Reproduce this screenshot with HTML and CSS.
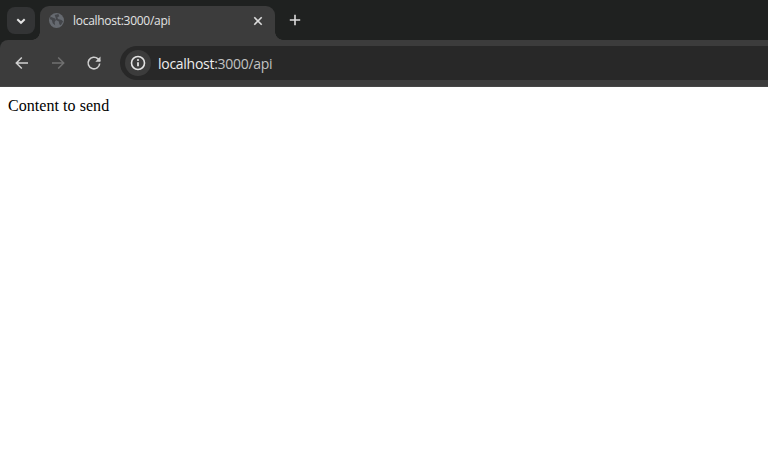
FILE: index.html
```html
<!DOCTYPE html>
<html lang="en">
<head>
<meta charset="utf-8">
<title>localhost:3000/api</title>
<link rel="stylesheet" href="styles.css">
</head>
<body>
<header class="chrome">
  <div class="tabstrip">
    <button class="tab-search" aria-label="Search tabs">
      <svg width="12" height="12" viewBox="0 0 12 12"><path d="M2.3 4.200 6 7.800l3.700-3.600" fill="none" stroke="#e3e3e3" stroke-width="2"/></svg>
    </button>
    <div class="tab">
      <svg class="favicon" width="15" height="15" viewBox="0 0 16 16">
        <circle cx="8" cy="8" r="8" fill="#666a70"/>
        <path d="M1.500 4 6 5.500l1.500 2L6 9.500 6.500 13 4 11 3 7.500 .8 6.500zM10 1l1 2.500-2 1 .5 2 4 1 1.500 1.500-2.500 4-1.500-1-.5-3-3-1.500L7 4.500 6 2z" fill="#44464a"/>
      </svg>
      <span class="tab-title">localhost:3000/api</span>
      <svg class="tab-close" width="10" height="10" viewBox="0 0 10 10"><path d="M1.300 1.300l7.400 7.400M8.700 1.300 1.300 8.700" stroke="#dcdcdc" stroke-width="1.600"/></svg>
    </div>
    <svg class="new-tab" width="12" height="12" viewBox="0 0 12 12"><path d="M6 .8v10.400M.8 6h10.400" stroke="#dcdcdc" stroke-width="1.600"/></svg>
  </div>
  <div class="toolbar">
    <svg class="nav" width="16" height="16" viewBox="0 0 16 16"><path d="M14 8H2.500M7.800 2.500 2.300 8l5.500 5.500" fill="none" stroke="#d0d0d0" stroke-width="1.500"/></svg>
    <svg class="nav" width="16" height="16" viewBox="0 0 16 16"><path d="M2 8h11.500M8.200 2.500 13.700 8l-5.500 5.500" fill="none" stroke="#707070" stroke-width="1.500"/></svg>
    <svg class="nav" width="16" height="16" viewBox="0 0 16 16"><path d="M13.700 8.500A5.800 5.800 0 1 1 12 3.900L14 6" fill="none" stroke="#d0d0d0" stroke-width="1.600"/><path d="M14.500 1.500v5.200H9.300z" fill="#d0d0d0"/></svg>
    <div class="omnibox">
      <span class="site-info">
        <svg width="16" height="16" viewBox="0 0 16 16"><circle cx="8" cy="8" r="6.500" fill="none" stroke="#e3e3e3" stroke-width="1.600"/><path d="M8 7.200v4" stroke="#e3e3e3" stroke-width="1.800"/><circle cx="8" cy="5" r="1.100" fill="#e3e3e3"/></svg>
      </span>
      <span class="url"><span class="host">localhost</span>:3000/api</span>
    </div>
  </div>
</header>
<main class="page">Content to send</main>
</body>
</html>
```
FILE: styles.css
```css
* { box-sizing: border-box; }
html, body { margin: 0; height: 100%; background: #fff; }
body { overflow: hidden; }

.chrome {
  font-family: "Open Sans", "Liberation Sans", sans-serif;
  background: #1f2120;
}

.tabstrip {
  display: flex;
  align-items: flex-start;
  height: 40px;
  padding: 6px 0 0 7px;
}
.tab-search {
  display: flex;
  align-items: center;
  justify-content: center;
  width: 28px;
  height: 27px;
  margin-top: 1px;
  padding: 0;
  border: 0;
  border-radius: 8px;
  background: #333435;
}
.tab {
  position: relative;
  display: flex;
  align-items: center;
  width: 235px;
  height: 34px;
  margin-left: 5px;
  padding: 0 12px 5px 9px;
  border-radius: 9px 9px 0 0;
  background: #3c3c3c;
}
.tab::before,
.tab::after {
  content: "";
  position: absolute;
  bottom: 0;
  width: 8px;
  height: 8px;
  background: radial-gradient(circle at var(--cx) 0, #1f2120 7.500px, #3c3c3c 8px);
}
.tab::before { left: -8px; --cx: 0; }
.tab::after { right: -8px; --cx: 100%; }
.favicon { flex: none; }
.tab-title {
  flex: 1;
  margin-left: 9px;
  font-size: 12px;
  letter-spacing: -0.28px;
  color: #e3e3e3;
  white-space: nowrap;
}
.tab-close { flex: none; }
.new-tab { margin: 8px 0 0 14px; }

.toolbar {
  display: flex;
  align-items: center;
  height: 47px;
  padding: 0 0 0 14px;
  border-radius: 8px 0 0 0;
  background: #3c3c3c;
  border-bottom: 1px solid #464646;
}
.nav { flex: none; margin-right: 20px; }
.nav:nth-child(3) { margin-right: 18px; }
.omnibox {
  flex: 1;
  display: flex;
  align-items: center;
  height: 34px;
  padding-left: 5px;
  border-radius: 17px 0 0 17px;
  background: #282828;
}
.site-info {
  display: flex;
  align-items: center;
  justify-content: center;
  width: 26px;
  height: 26px;
  border-radius: 50%;
  background: #3c3c3c;
}
.url {
  margin-left: 7px;
  padding-top: 1px;
  font-size: 14px;
  letter-spacing: -0.28px;
  color: #c2c2c2;
  white-space: nowrap;
}
.host { color: #ededed; }

.page {
  padding: 10px 8px;
  font-family: "Liberation Serif", serif;
  font-size: 16px;
  line-height: 18px;
  letter-spacing: 0.05px;
  color: #000;
}
```
